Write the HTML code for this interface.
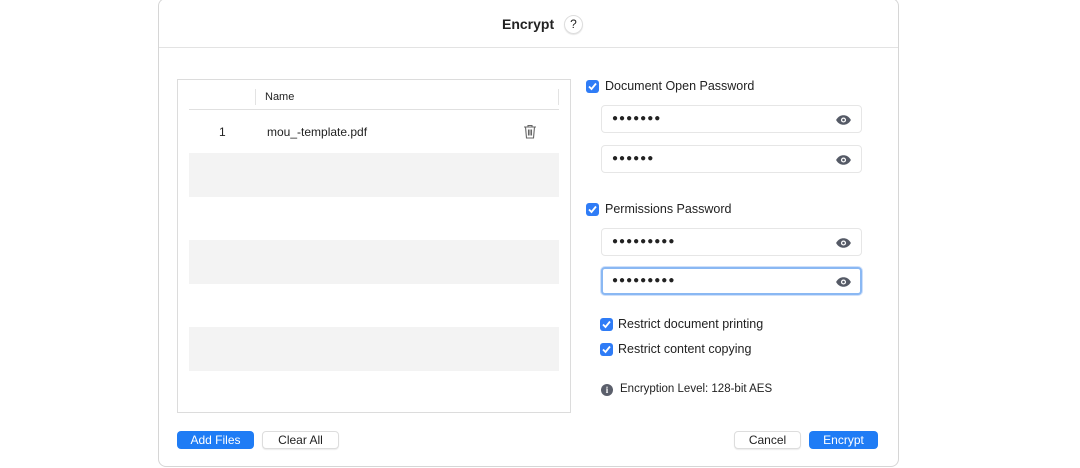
<!DOCTYPE html>
<html><head><style>
*{box-sizing:border-box;margin:0;padding:0}
body{width:1080px;height:468px;background:#fff;font-family:"Liberation Sans",sans-serif;position:relative;overflow:hidden;color:#222}
.dlg{position:absolute;left:158px;top:-2px;width:741px;height:469px;border:1px solid #d6d6d6;border-radius:8px;background:#fff}
.abs{position:absolute}
.hdr{left:0;top:0;width:100%;height:49px;border-bottom:1px solid #e3e3e3}
.title{position:absolute;left:343px;font-size:14px;font-weight:bold;color:#222}
.help{position:absolute;left:405px;width:19px;height:19px;border-radius:50%;border:1px solid #ddd;font-size:12px;text-align:center;line-height:17px;box-shadow:0 1px 1px rgba(0,0,0,.1)}
.tbl{left:177px;top:79px;width:394px;height:334px;border:1px solid #dcdcdc}
.row{position:absolute;left:189px;width:370px;height:44px}
.g{background:#f3f3f3}
.cb{position:absolute;width:13px;height:13px;border-radius:3px;background:#2f7cf6}
.cb svg{position:absolute;left:1px;top:1px}
.lbl{position:absolute;font-size:12.5px;color:#222}
.inp{position:absolute;left:601px;width:261px;height:28px;border:1px solid #e6e6e6;border-radius:4px;background:#fff}
.inp .dots{position:absolute;left:10px;top:7px;font-size:10px;letter-spacing:1px;color:#222}
.inp svg{position:absolute;right:9px;top:8px}
.foc{border:2px solid #8ab8f3;box-shadow:0 0 0 1px #cfe0fa}
.btn{position:absolute;top:431px;height:18px;border-radius:4px;font-size:12px;text-align:center;line-height:18px}
.w{background:#fff;border:1px solid #ddd;box-shadow:0 1px 1px rgba(0,0,0,.08);color:#222;line-height:16px}
.b{background:#1f7cf5;color:#fff}
</style></head><body>
<div class="dlg">
<div class="abs hdr"></div>
<div class="title" style="top:17px">Encrypt</div>
<div class="help" style="top:16px">?</div>
</div>
<div class="abs tbl"></div>
<div class="abs" style="left:189px;top:109px;width:370px;height:1px;background:#e0e0e0"></div>
<div class="abs" style="left:255px;top:89px;width:1px;height:16px;background:#e3e3e3"></div>
<div class="abs" style="left:558px;top:89px;width:1px;height:16px;background:#e3e3e3"></div>
<div class="lbl" style="left:265px;top:91px;font-size:11px">Name</div>
<div class="lbl" style="left:219px;top:125px;font-size:12px">1</div>
<div class="lbl" style="left:267px;top:125px;font-size:12px">mou_-template.pdf</div>
<svg class="abs" style="left:523px;top:124px" width="14" height="15" viewBox="0 0 14 15" fill="none" stroke="#666" stroke-width="1.1"><path d="M1 3h12M5 3V1.5h4V3M2.5 3l1 11h7l1-11M5.5 5.5v6M7 5.5v6M8.5 5.5v6"/></svg>
<div class="row g" style="top:153px"></div>
<div class="row g" style="top:240px"></div>
<div class="row g" style="top:327px"></div>

<div class="cb" style="left:586px;top:80px"><svg width="11" height="11" viewBox="0 0 11 11"><path d="M2 5.5l2.5 2.5L9 2.5" stroke="#fff" stroke-width="1.8" fill="none"/></svg></div>
<div class="lbl" style="left:605px;top:79px">Document Open Password</div>
<div class="inp" style="top:105px"><span class="dots">●●●●●●●</span><svg width="17" height="12" viewBox="0 0 16 11"><path d="M1 5.5C3 2 5.5 1 8 1s5 1 7 4.5C13 9 10.5 10 8 10S3 9 1 5.5z" fill="#555a66"/><circle cx="8" cy="5.5" r="2.4" fill="#fff"/><circle cx="8" cy="5.5" r="1.2" fill="#555a66"/></svg></div>
<div class="inp" style="top:145px"><span class="dots">●●●●●●</span><svg width="17" height="12" viewBox="0 0 16 11"><path d="M1 5.5C3 2 5.5 1 8 1s5 1 7 4.5C13 9 10.5 10 8 10S3 9 1 5.5z" fill="#555a66"/><circle cx="8" cy="5.5" r="2.4" fill="#fff"/><circle cx="8" cy="5.5" r="1.2" fill="#555a66"/></svg></div>

<div class="cb" style="left:586px;top:203px"><svg width="11" height="11" viewBox="0 0 11 11"><path d="M2 5.5l2.5 2.5L9 2.5" stroke="#fff" stroke-width="1.8" fill="none"/></svg></div>
<div class="lbl" style="left:605px;top:202px">Permissions Password</div>
<div class="inp" style="top:228px"><span class="dots">●●●●●●●●●</span><svg width="17" height="12" viewBox="0 0 16 11"><path d="M1 5.5C3 2 5.5 1 8 1s5 1 7 4.5C13 9 10.5 10 8 10S3 9 1 5.5z" fill="#555a66"/><circle cx="8" cy="5.5" r="2.4" fill="#fff"/><circle cx="8" cy="5.5" r="1.2" fill="#555a66"/></svg></div>
<div class="inp foc" style="top:267px"><span class="dots" style="left:9px;top:6px">●●●●●●●●●</span><svg width="17" height="12" viewBox="0 0 16 11" style="right:8px;top:7px"><path d="M1 5.5C3 2 5.5 1 8 1s5 1 7 4.5C13 9 10.5 10 8 10S3 9 1 5.5z" fill="#555a66"/><circle cx="8" cy="5.5" r="2.4" fill="#fff"/><circle cx="8" cy="5.5" r="1.2" fill="#555a66"/></svg></div>

<div class="cb" style="left:600px;top:318px"><svg width="11" height="11" viewBox="0 0 11 11"><path d="M2 5.5l2.5 2.5L9 2.5" stroke="#fff" stroke-width="1.8" fill="none"/></svg></div>
<div class="lbl" style="left:618px;top:317px">Restrict document printing</div>
<div class="cb" style="left:600px;top:343px"><svg width="11" height="11" viewBox="0 0 11 11"><path d="M2 5.5l2.5 2.5L9 2.5" stroke="#fff" stroke-width="1.8" fill="none"/></svg></div>
<div class="lbl" style="left:618px;top:342px">Restrict content copying</div>
<div class="abs" style="left:601px;top:384px;width:12px;height:12px;border-radius:50%;background:#5b5f6b;color:#fff;font-size:9px;font-weight:bold;text-align:center;line-height:12px;font-family:'Liberation Serif',serif">i</div>
<div class="lbl" style="left:620px;top:383px;font-size:11.5px">Encryption Level: 128-bit AES</div>

<div class="btn b" style="left:177px;width:77px">Add Files</div>
<div class="btn w" style="left:262px;width:77px">Clear All</div>
<div class="btn w" style="left:734px;width:67px">Cancel</div>
<div class="btn b" style="left:809px;width:69px">Encrypt</div>
</body></html>
